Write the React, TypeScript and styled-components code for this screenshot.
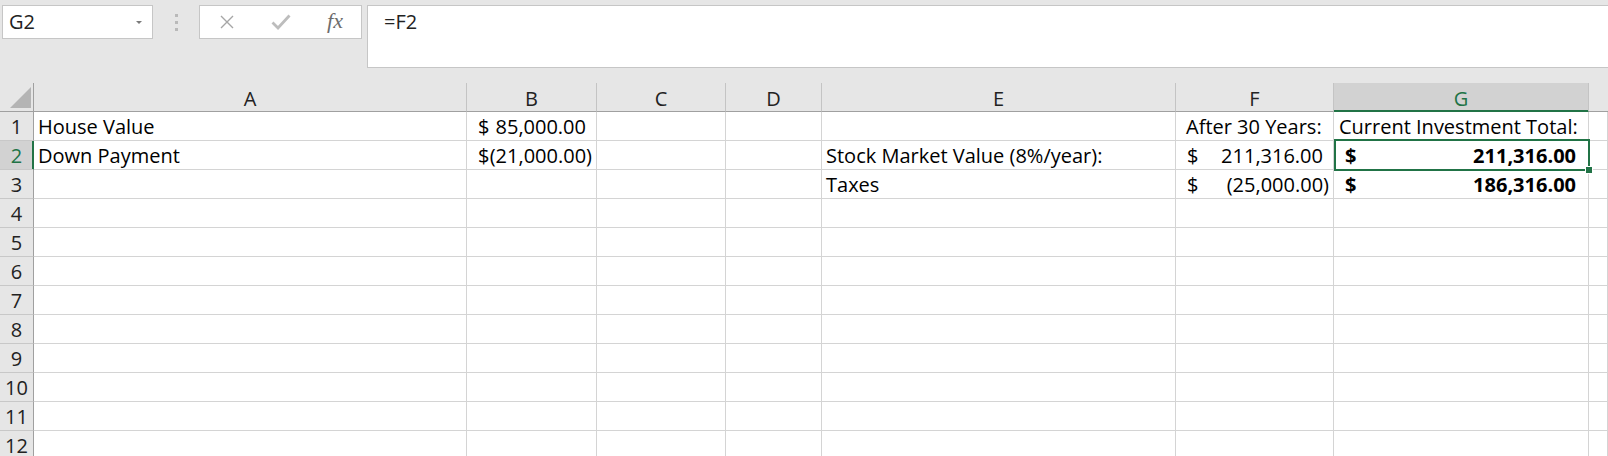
import React from 'react'
import styled, { createGlobalStyle, css } from 'styled-components'

const GREEN = '#217346'

const GlobalStyle = createGlobalStyle`
  html, body {
    margin: 0;
    height: 456px;
    overflow: hidden;
    background: #e6e6e6;
    font-family: "Open Sans", "Noto Sans", sans-serif;
    color: #000;
  }
`

const Page = styled.div`
  width: 1608px;
  height: 456px;
  overflow: hidden;
`

const FormulaBar = styled.div`
  display: flex;
  align-items: flex-start;
  height: 83px;
  box-sizing: border-box;
  padding: 5px 0 0 2px;
`

const NameBox = styled.div`
  position: relative;
  width: 151px;
  height: 34px;
  box-sizing: border-box;
  background: #fff;
  border: 1px solid #c6c6c6;
  padding-left: 6px;
  font-size: 20px;
  line-height: 32px;
  color: #222;
`

const Caret = styled.span`
  position: absolute;
  right: 10px;
  top: 15px;
  width: 0;
  height: 0;
  border-left: 3px solid transparent;
  border-right: 3px solid transparent;
  border-top: 3px solid #7a7a7a;
`

const Grip = styled.div`
  width: 46px;
  height: 34px;
  display: flex;
  flex-direction: column;
  align-items: center;
  justify-content: center;
  gap: 4px;
`

const GripDot = styled.span`
  width: 3px;
  height: 3px;
  background: #b9b9b9;
`

const ButtonGroup = styled.div`
  width: 163px;
  height: 34px;
  box-sizing: border-box;
  background: #fff;
  border: 1px solid #c6c6c6;
  display: grid;
  grid-template-columns: repeat(3, 54px);
  align-items: center;
  justify-items: center;
`

const Fx = styled.span`
  font-family: "Liberation Serif", "DejaVu Serif", serif;
  font-style: italic;
  font-size: 22px;
  color: #6d6d6d;
  line-height: 1;
  margin-top: -2px;
`

const FormulaInput = styled.div`
  flex: 1;
  margin-left: 5px;
  height: 63px;
  box-sizing: border-box;
  background: #fff;
  border: 1px solid #c6c6c6;
  border-right: none;
  padding-left: 16px;
  font-size: 20px;
  line-height: 32px;
  color: #222;
`

const Sheet = styled.div`
  display: grid;
  grid-template-columns: 34px 433px 130px 129px 96px 354px 158px 255px 1fr;
  grid-auto-rows: 29px;
  font-size: 20px;
`

const Corner = styled.div`
  box-sizing: border-box;
  border-right: 1px solid #a0a0a0;
  border-bottom: 1px solid #a0a0a0;
  background: #e6e6e6;
  display: flex;
  align-items: flex-end;
  justify-content: flex-end;
  padding: 0 2px 3px 0;
`

const ColHead = styled.div<{ $active?: boolean; $last?: boolean }>`
  box-sizing: border-box;
  background: #e6e6e6;
  border-right: 1px solid #c4c4c4;
  border-bottom: 1px solid #a0a0a0;
  text-align: center;
  line-height: 32px;
  color: #222;
  ${(p) =>
    p.$last &&
    css`
      border-right: none;
    `}
  ${(p) =>
    p.$active &&
    css`
      background: #d2d2d2;
      color: ${GREEN};
      border-bottom-color: ${GREEN};
      box-shadow: inset 0 -1px 0 ${GREEN};
    `}
`

const RowHead = styled.div<{ $active?: boolean }>`
  box-sizing: border-box;
  background: #e6e6e6;
  border-right: 1px solid #a0a0a0;
  border-bottom: 1px solid #c8c8c8;
  text-align: center;
  line-height: 29px;
  color: #222;
  ${(p) =>
    p.$active &&
    css`
      background: #d2d2d2;
      color: ${GREEN};
      border-right-color: ${GREEN};
      box-shadow: inset -1px 0 0 ${GREEN};
    `}
`

const Cell = styled.div<{ $pad?: number }>`
  position: relative;
  box-sizing: border-box;
  background: #fff;
  border-right: 1px solid #d4d4d4;
  border-bottom: 1px solid #d4d4d4;
  padding-left: ${(p) => p.$pad ?? 4}px;
  line-height: 29px;
  white-space: nowrap;
`

const Money = styled(Cell)<{ $bold?: boolean; $neg?: boolean }>`
  display: flex;
  justify-content: space-between;
  padding-left: 11px;
  padding-right: ${(p) => (p.$neg ? 4 : p.$bold ? 12 : 10)}px;
  font-weight: ${(p) => (p.$bold ? 700 : 400)};
`

const Selection = styled.div`
  position: absolute;
  top: -2px;
  left: 0;
  right: -2px;
  bottom: -2px;
  border: 2px solid ${GREEN};
  pointer-events: none;
  z-index: 2;
`

const FillHandle = styled.span`
  position: absolute;
  right: -5px;
  bottom: -5px;
  width: 6px;
  height: 6px;
  background: ${GREEN};
  border: 1px solid #fff;
`

const columns = ['A', 'B', 'C', 'D', 'E', 'F', 'G']

type MoneyVal = { value: string; bold?: boolean; neg?: boolean }

const money = (value: string, opts: { bold?: boolean; neg?: boolean } = {}): MoneyVal => ({
  value,
  ...opts,
})

const rows: (string | MoneyVal | null)[][] = [
  ['House Value', money('85,000.00'), null, null, null, 'After 30 Years:', 'Current Investment Total:'],
  [
    'Down Payment',
    money('(21,000.00)', { neg: true }),
    null,
    null,
    'Stock Market Value (8%/year):',
    money('211,316.00'),
    money('211,316.00', { bold: true }),
  ],
  [null, null, null, null, 'Taxes', money('(25,000.00)', { neg: true }), money('186,316.00', { bold: true })],
]

const CancelIcon = () => (
  <svg width="16" height="16" viewBox="0 0 16 16">
    <path d="M2 2 L14 14 M14 2 L2 14" stroke="#a6a6a6" strokeWidth="1.4" fill="none" />
  </svg>
)

const EnterIcon = () => (
  <svg width="20" height="16" viewBox="0 0 20 16">
    <path d="M1.5 8.5 L7 14 L18.5 1.5" stroke="#bdbdbd" strokeWidth="2.8" fill="none" />
  </svg>
)

const CornerTriangle = () => (
  <svg width="21" height="21" viewBox="0 0 21 21">
    <polygon points="21,0 21,21 0,21" fill="#b4b4b4" />
  </svg>
)

const App: React.FC = () => {
  const totalRows = 12
  return (
    <Page>
      <GlobalStyle />
      <FormulaBar>
        <NameBox>
          G2
          <Caret />
        </NameBox>
        <Grip>
          <GripDot />
          <GripDot />
          <GripDot />
        </Grip>
        <ButtonGroup>
          <CancelIcon />
          <EnterIcon />
          <Fx>fx</Fx>
        </ButtonGroup>
        <FormulaInput>=F2</FormulaInput>
      </FormulaBar>

      <Sheet>
        <Corner>
          <CornerTriangle />
        </Corner>
        {columns.map((c) => (
          <ColHead key={c} $active={c === 'G'}>
            {c}
          </ColHead>
        ))}
        <ColHead $last />

        {Array.from({ length: totalRows }, (_, r) => {
          const data = rows[r] ?? []
          return (
            <React.Fragment key={r}>
              <RowHead $active={r === 1}>{r + 1}</RowHead>
              {columns.map((c, ci) => {
                const v = data[ci]
                const selected = r === 1 && c === 'G'
                const pad = c === 'F' ? 10 : c === 'G' ? 5 : 4
                if (v && typeof v === 'object') {
                  return (
                    <Money key={c} $bold={v.bold} $neg={v.neg}>
                      <span>$</span>
                      <span>{v.value}</span>
                      {selected && (
                        <Selection>
                          <FillHandle />
                        </Selection>
                      )}
                    </Money>
                  )
                }
                return (
                  <Cell key={c} $pad={pad}>
                    {v}
                  </Cell>
                )
              })}
              <Cell />
            </React.Fragment>
          )
        })}
      </Sheet>
    </Page>
  )
}

export default App
